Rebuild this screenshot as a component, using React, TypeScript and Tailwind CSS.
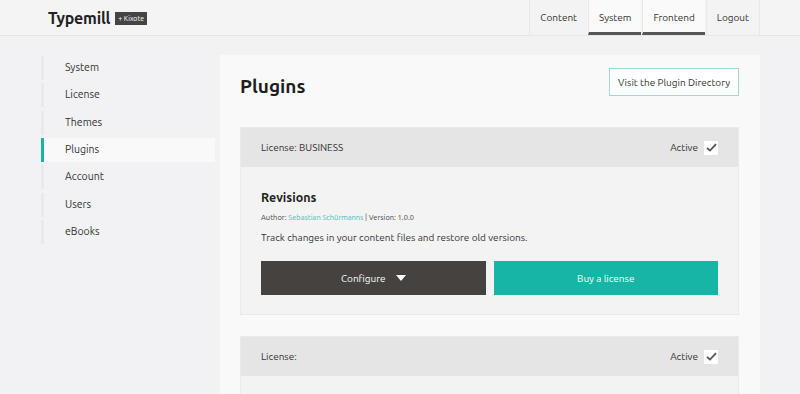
import { useState } from 'react'

const sideItems = ['System', 'License', 'Themes', 'Plugins', 'Account', 'Users', 'eBooks']

function Check() {
  return (
    <span className="w-[14px] h-[14px] bg-white flex items-center justify-center">
      <svg width="11" height="9" viewBox="0 0 11 9" fill="none">
        <path d="M1 4.8 L4 7.6 L10 1.2" stroke="#555" strokeWidth="1.8" />
      </svg>
    </span>
  )
}

function PluginCard({ license, children }: { license: string; children?: React.ReactNode }) {
  return (
    <div className="border border-[#ebeaeb] bg-[#f4f3f4] mb-[21px]">
      <div className="h-[39px] bg-[#e6e5e6] flex items-center justify-between px-[20px] text-[10px] text-[#333]">
        <span>License: {license}</span>
        <span className="flex items-center gap-[6px]">
          Active <Check />
        </span>
      </div>
      {children}
    </div>
  )
}

export default function App() {
  const [active] = useState('Plugins')

  return (
    <div className="min-h-screen bg-[#f2f1f3] font-['Ubuntu','Noto_Sans',sans-serif] text-[#333] overflow-hidden h-[394px]">
      <header className="h-[36px] bg-[#f4f4f4] border-b border-[#e6e6e6] flex items-stretch justify-between pl-[48px] pr-[40px]">
        <div className="flex items-center gap-[5px]">
          <span className="text-[16px] font-bold text-[#222] tracking-[-0.2px]">Typemill</span>
          <span className="bg-[#444] text-white text-[7px] px-[3px] h-[13px] leading-[13px] mt-[1px]">+ Kixote</span>
        </div>
        <nav className="flex items-stretch gap-[1px] text-[10px] text-[#333]">
          {[
            { label: 'Content', on: false },
            { label: 'System', on: true },
            { label: 'Frontend', on: true },
            { label: 'Logout', on: false },
          ].map((n) => (
            <div
              key={n.label}
              className={`flex items-center px-[10px] border-l border-[#e8e8e8] last:border-r ${
                n.on ? 'bg-[#fafafa] border-b-[3px] border-b-[#555] pt-[3px]' : 'bg-[#f3f3f3]'
              }`}
            >
              {n.label}
            </div>
          ))}
        </nav>
      </header>

      <div className="flex pl-[41px] pt-[19px] gap-[5px]">
        <aside className="w-[174px] flex flex-col gap-[3.33px] pt-[1px]">
          {sideItems.map((s) => (
            <div
              key={s}
              className={`h-[24px] flex items-center pl-[21px] text-[10.5px] border-l-[3px] ${
                s === active ? 'border-[#17b3a9] bg-[#f9f9fa]' : 'border-[#e9e8ea]'
              }`}
            >
              {s}
            </div>
          ))}
        </aside>

        <main className="w-[540px] bg-[#faf9fa] px-[20px] pt-[13px] pb-[20px] min-h-[400px]">
          <div className="flex items-start justify-between pr-[1px] h-[32px]">
            <h1 className="text-[19px] leading-[28px] font-bold text-[#1e1e1e] mt-[4px]">Plugins</h1>
            <button className="h-[28px] px-[8px] border border-[#9fd9d2] bg-white text-[10px] text-[#333]">
              Visit the Plugin Directory
            </button>
          </div>

          <div className="mt-[27px] mr-[1px]">
            <PluginCard license="BUSINESS">
              <div className="px-[20px] pt-[21px] pb-[19px]">
                <h2 className="text-[12.5px] font-bold text-[#1e1e1e] leading-[18px]">Revisions</h2>
                <p className="text-[7.5px] text-[#444] mt-[6px]">
                  Author: <span className="text-[#3cc0b4]">Sebastian Schürmanns</span> | Version: 1.0.0
                </p>
                <p className="text-[10px] text-[#333] mt-[7px]">
                  Track changes in your content files and restore old versions.
                </p>
                <div className="flex gap-[8px] mt-[16px]">
                  <button className="flex-1 h-[34px] bg-[#454240] text-white text-[10px] flex items-center justify-center gap-[10px]">
                    Configure
                    <svg width="10" height="6" viewBox="0 0 10 6">
                      <path d="M0 0 H10 L5 6 Z" fill="#fff" />
                    </svg>
                  </button>
                  <button className="flex-1 h-[34px] bg-[#16b5a5] text-white text-[10px]">Buy a license</button>
                </div>
              </div>
            </PluginCard>
            <PluginCard license="">
              <div className="h-[40px]" />
            </PluginCard>
          </div>
        </main>
      </div>
    </div>
  )
}
